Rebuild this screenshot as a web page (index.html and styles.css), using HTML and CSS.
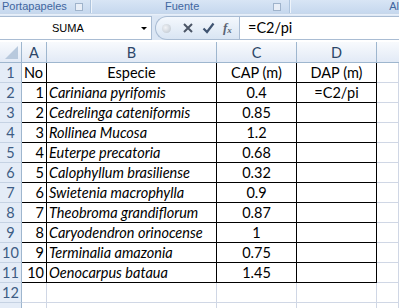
FILE: index.html
```html
<!DOCTYPE html>
<html>
<head>
  <title>Libro1 - Especies</title>
  <link rel="stylesheet" href="styles.css">
</head>
<body>
  <div class="ribbon-labels">
    <div class="group group-clip">
      <span class="group-name">Portapapeles</span>
      <span class="launcher"></span>
    </div>
    <div class="group group-font">
      <span class="group-name">Fuente</span>
      <span class="launcher"></span>
    </div>
    <div class="group group-align">
      <span class="group-name">Al</span>
    </div>
  </div>
  <div class="ribbon-edge"></div>

  <div class="formula-bar">
    <div class="name-box">
      <span class="name-text">SUMA</span>
      <span class="name-arrow"></span>
    </div>
    <div class="fx-buttons">
      <span class="grip"></span>
      <svg class="btn-icon" width="12" height="12" viewBox="0 0 12 12">
        <path d="M2 2 L10 10 M10 2 L2 10" stroke="#4b5566" stroke-width="2" fill="none"/>
      </svg>
      <svg class="btn-icon" width="13" height="12" viewBox="0 0 13 12">
        <path d="M1.5 6.5 L5 10 L11.5 1.5" stroke="#3f5471" stroke-width="2.2" fill="none"/>
      </svg>
      <span class="fx">f<sub>x</sub></span>
    </div>
    <div class="formula-input">=C2/pi</div>
  </div>

  <table class="sheet">
    <colgroup>
      <col class="w-rh">
      <col class="w-a">
      <col class="w-b">
      <col class="w-c">
      <col class="w-d">
      <col class="w-e">
    </colgroup>
    <tr class="col-heads">
      <th class="corner"><span class="corner-tri"></span></th>
      <th>A</th>
      <th>B</th>
      <th>C</th>
      <th>D</th>
      <th class="last"></th>
    </tr>
    <tr>
      <th class="rh">1</th>
      <td class="box">No</td>
      <td class="box center">Especie</td>
      <td class="box center">CAP (m)</td>
      <td class="box center">DAP (m)</td>
      <td></td>
    </tr>
    <tr>
      <th class="rh">2</th>
      <td class="box num">1</td>
      <td class="box sp">Cariniana pyrifomis</td>
      <td class="box center">0.4</td>
      <td class="box center">=C2/pi</td>
      <td></td>
    </tr>
    <tr>
      <th class="rh">3</th>
      <td class="box num">2</td>
      <td class="box sp">Cedrelinga cateniformis</td>
      <td class="box center">0.85</td>
      <td class="box"></td>
      <td></td>
    </tr>
    <tr>
      <th class="rh">4</th>
      <td class="box num">3</td>
      <td class="box sp">Rollinea Mucosa</td>
      <td class="box center">1.2</td>
      <td class="box"></td>
      <td></td>
    </tr>
    <tr>
      <th class="rh">5</th>
      <td class="box num">4</td>
      <td class="box sp">Euterpe precatoria</td>
      <td class="box center">0.68</td>
      <td class="box"></td>
      <td></td>
    </tr>
    <tr>
      <th class="rh">6</th>
      <td class="box num">5</td>
      <td class="box sp">Calophyllum brasiliense</td>
      <td class="box center">0.32</td>
      <td class="box"></td>
      <td></td>
    </tr>
    <tr>
      <th class="rh">7</th>
      <td class="box num">6</td>
      <td class="box sp">Swietenia macrophylla</td>
      <td class="box center">0.9</td>
      <td class="box"></td>
      <td></td>
    </tr>
    <tr>
      <th class="rh">8</th>
      <td class="box num">7</td>
      <td class="box sp">Theobroma grandiflorum</td>
      <td class="box center">0.87</td>
      <td class="box"></td>
      <td></td>
    </tr>
    <tr>
      <th class="rh">9</th>
      <td class="box num">8</td>
      <td class="box sp">Caryodendron orinocense</td>
      <td class="box center">1</td>
      <td class="box"></td>
      <td></td>
    </tr>
    <tr>
      <th class="rh">10</th>
      <td class="box num">9</td>
      <td class="box sp">Terminalia amazonia</td>
      <td class="box center">0.75</td>
      <td class="box"></td>
      <td></td>
    </tr>
    <tr>
      <th class="rh">11</th>
      <td class="box num">10</td>
      <td class="box sp">Oenocarpus bataua</td>
      <td class="box center">1.45</td>
      <td class="box"></td>
      <td></td>
    </tr>
    <tr>
      <th class="rh">12</th>
      <td></td>
      <td></td>
      <td></td>
      <td></td>
      <td></td>
    </tr>
    <tr>
      <th class="rh"></th>
      <td></td>
      <td></td>
      <td></td>
      <td></td>
      <td></td>
    </tr>
  </table>
</body>
</html>
```

FILE: styles.css
```css
:root {
  --ribbon-text: #3f66a0;
  --bar-bg: #dbe6f4;
  --head-bg: #e4ecf7;
  --head-text: #2c4668;
  --row-text: #3d5c84;
  --head-line: #9eb6ce;
  --grid: #d0d7e5;
}

body {
  margin: 0;
  width: 399px;
  height: 308px;
  overflow: hidden;
  background: #ffffff;
  font-family: Lato, "Open Sans", sans-serif;
  color: #000000;
}

/* ribbon group names */
.ribbon-labels {
  display: flex;
  height: 13px;
  background: linear-gradient(#d8e5f5, #c6d8ee);
  color: var(--ribbon-text);
  font-family: "Liberation Sans", sans-serif;
  font-size: 11px;
  line-height: 13px;
}

.group {
  display: flex;
  align-items: center;
  border-right: 1px solid #aec4dd;
  box-shadow: 1px 0 0 #eef4fb;
}

.group-clip {
  width: 91px;
  padding-left: 2px;
  box-sizing: border-box;
}

.group-font {
  width: 196px;
  margin-left: 3px;
  padding-left: 71px;
  box-sizing: border-box;
}

.group-align {
  flex: 1;
  margin-left: 3px;
  justify-content: flex-end;
  border-right: none;
  box-shadow: none;
}

.group-name {
  flex: 1;
  white-space: nowrap;
}

.group-font .group-name {
  flex: none;
  width: 108px;
}

.group-align .group-name {
  flex: none;
}

.launcher {
  width: 6px;
  height: 6px;
  margin-right: 7px;
  border: 1px solid #9fb3cb;
  background: #e8eef7;
}

.ribbon-edge {
  height: 3px;
  background: linear-gradient(#b7cbe3, #e7eff9 50%, var(--bar-bg));
}

/* formula bar */
.formula-bar {
  display: flex;
  height: 24px;
  background: var(--bar-bg);
}

.name-box {
  display: flex;
  align-items: center;
  width: 152px;
  background: #ffffff;
  border: 1px solid #a9bcd3;
  border-left: none;
  box-sizing: border-box;
  font-family: "Liberation Sans", sans-serif;
  font-size: 11px;
}

.name-text {
  flex: 1;
  padding-left: 52px;
}

.name-arrow {
  width: 0;
  height: 0;
  margin-right: 4px;
  border-left: 3px solid transparent;
  border-right: 3px solid transparent;
  border-top: 3px solid #000000;
}

.fx-buttons {
  display: flex;
  align-items: center;
  gap: 8px;
  width: 84px;
  margin-left: 3px;
  padding-left: 6px;
  box-sizing: border-box;
  border: 1px solid #a9bcd3;
  border-right: none;
  border-radius: 12px 0 0 12px;
  background: linear-gradient(#f4f8fd, #d9e5f3);
}

.grip {
  width: 9px;
  height: 9px;
  margin-right: 3px;
  border-radius: 50%;
  background: radial-gradient(circle at 40% 40%, #f2f4f7, #b9c2cc);
}

.fx {
  font-family: "Liberation Serif", serif;
  font-style: italic;
  font-weight: bold;
  font-size: 13px;
  color: #5b6473;
}

.fx sub {
  font-size: 9px;
  vertical-align: -1px;
}

.formula-input {
  flex: 1;
  padding-left: 8px;
  background: #ffffff;
  border: 1px solid #a9bcd3;
  border-right: none;
  font-size: 14.5px;
  line-height: 22px;
}

/* worksheet */
.sheet {
  margin-top: 2px;
  border-collapse: separate;
  border-spacing: 0;
  table-layout: fixed;
  width: 399px;
  font-size: 14.5px;
}

.w-rh { width: 22px; }
.w-a { width: 25px; }
.w-b { width: 170px; }
.w-c { width: 80px; }
.w-d { width: 80px; }
.w-e { width: 22px; }

.sheet th,
.sheet td {
  height: 19px;
  padding: 0 2px;
  box-sizing: content-box;
  border-right: 1px solid var(--grid);
  border-bottom: 1px solid var(--grid);
  white-space: nowrap;
  overflow: hidden;
  vertical-align: bottom;
  line-height: 19px;
}

.col-heads th {
  height: 20px;
  background: linear-gradient(#f8fafd, #e2eaf6);
  border-right: 1px solid var(--head-line);
  border-bottom: 1px solid var(--head-line);
  font-weight: normal;
  color: var(--head-text);
  text-align: center;
  vertical-align: middle;
}

.col-heads th.last {
  border-right: none;
}

.corner {
  position: relative;
}

.corner-tri {
  position: absolute;
  right: 3px;
  bottom: 3px;
  width: 0;
  height: 0;
  border-left: 13px solid transparent;
  border-bottom: 13px solid #b8c9dd;
}

.rh {
  background: var(--head-bg);
  color: var(--row-text);
  font-weight: normal;
  text-align: center;
  border-right: 1px solid var(--head-line) !important;
  border-bottom: 1px solid #c5d2e3 !important;
}

.sheet td.box {
  border-right: 1px solid #000000;
  border-bottom: 1px solid #000000;
}

.num { text-align: right; }
.center { text-align: center; }
.sp { font-style: italic; }
```
